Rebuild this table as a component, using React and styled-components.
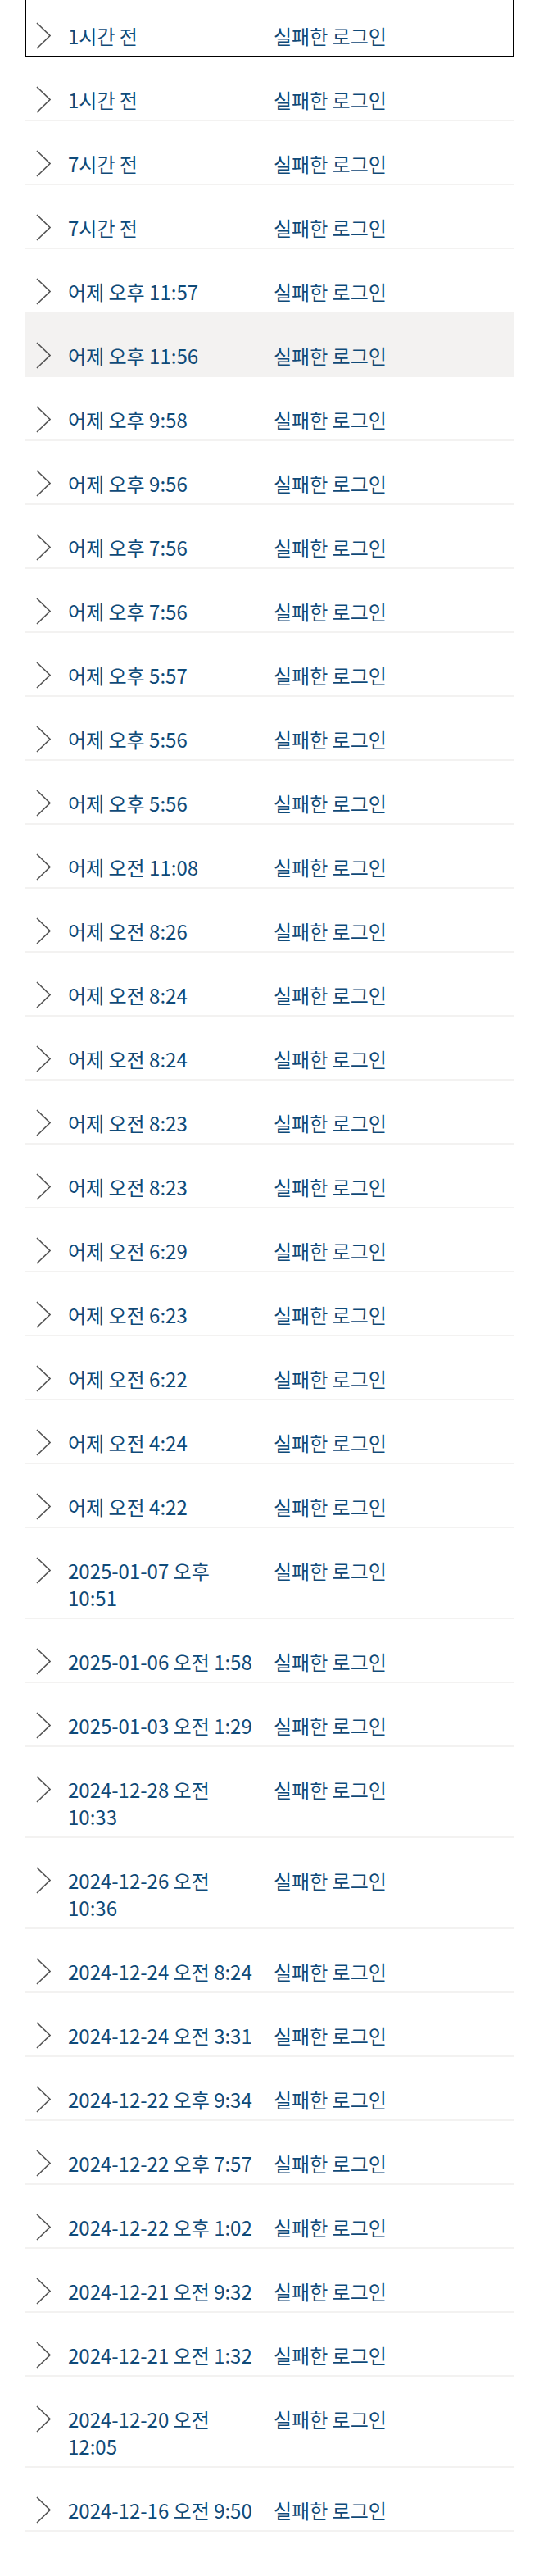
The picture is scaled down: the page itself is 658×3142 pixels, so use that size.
import React from "react";
import styled, { createGlobalStyle } from "styled-components";

const GlobalStyle = createGlobalStyle`
  html, body {
    margin: 0;
    padding: 0;
    background: #ffffff;
  }
  body {
    font-family: "Noto Sans CJK KR", "Noto Sans", sans-serif;
    -webkit-font-smoothing: antialiased;
  }
`;

const Page = styled.div`
  padding: 0 30px;
  overflow: hidden;
`;

const List = styled.div`
  display: flex;
  flex-direction: column;
  margin-top: -8px;
`;

const Row = styled.div`
  display: grid;
  grid-template-columns: 39px 251px 1fr;
  align-items: start;
  padding: 35px 0 8px 14px;
  border-bottom: 2px solid #f3f2f1;
  background: ${(p) => (p.$hover ? "#f3f2f1" : "transparent")};
  outline: ${(p) => (p.$focused ? "2px solid #000000" : "none")};
  outline-offset: -2px;
`;

const ChevronCell = styled.div`
  height: 33px;
  display: flex;
  align-items: center;
`;

const Cell = styled.div`
  font-size: 24px;
  line-height: 33px;
  color: #0f4a78;
`;

const DateCell = styled(Cell)`
  padding-right: 16px;
`;

const Chevron = () => (
  <svg width="18" height="33" viewBox="0 0 18 33" aria-hidden="true">
    <polyline
      points="1,1 17,16.5 1,32"
      fill="none"
      stroke="#555555"
      strokeWidth="1.6"
      strokeLinejoin="miter"
    />
  </svg>
);

const rows = [
  "1시간 전",
  "1시간 전",
  "7시간 전",
  "7시간 전",
  "어제 오후 11:57",
  "어제 오후 11:56",
  "어제 오후 9:58",
  "어제 오후 9:56",
  "어제 오후 7:56",
  "어제 오후 7:56",
  "어제 오후 5:57",
  "어제 오후 5:56",
  "어제 오후 5:56",
  "어제 오전 11:08",
  "어제 오전 8:26",
  "어제 오전 8:24",
  "어제 오전 8:24",
  "어제 오전 8:23",
  "어제 오전 8:23",
  "어제 오전 6:29",
  "어제 오전 6:23",
  "어제 오전 6:22",
  "어제 오전 4:24",
  "어제 오전 4:22",
  "2025-01-07 오후 10:51",
  "2025-01-06 오전 1:58",
  "2025-01-03 오전 1:29",
  "2024-12-28 오전 10:33",
  "2024-12-26 오전 10:36",
  "2024-12-24 오전 8:24",
  "2024-12-24 오전 3:31",
  "2024-12-22 오후 9:34",
  "2024-12-22 오후 7:57",
  "2024-12-22 오후 1:02",
  "2024-12-21 오전 9:32",
  "2024-12-21 오전 1:32",
  "2024-12-20 오전 12:05",
  "2024-12-16 오전 9:50",
];

export default function App() {
  return (
    <>
      <GlobalStyle />
      <Page>
        <List>
          {rows.map((when, i) => (
            <Row key={i} $focused={i === 0} $hover={i === 5}>
              <ChevronCell>
                <Chevron />
              </ChevronCell>
              <DateCell>{when}</DateCell>
              <Cell>실패한 로그인</Cell>
            </Row>
          ))}
        </List>
      </Page>
    </>
  );
}
